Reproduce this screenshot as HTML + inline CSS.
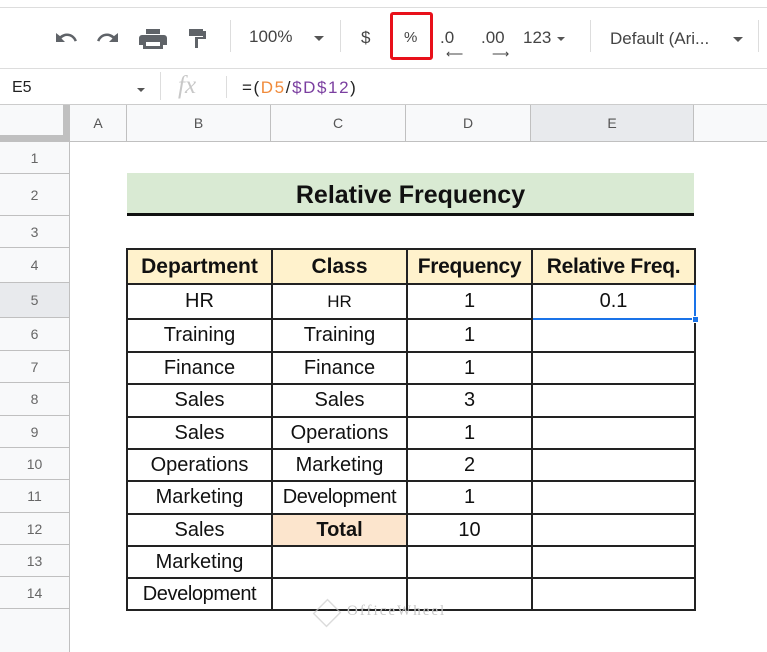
<!DOCTYPE html>
<html><head><style>
*{margin:0;padding:0;box-sizing:border-box}
body{width:767px;height:652px;background:#fff;position:relative;overflow:hidden;font-family:"Liberation Sans",Arial,sans-serif;color:#222}
.a{position:absolute}
.tb{color:#444;font-size:17px}
.rh{position:absolute;left:0;width:70px;background:#f8f9fa;border-bottom:1px solid #c0c0c0;border-right:1px solid #c0c0c0;text-align:center;color:#666;font-size:14px}
.ch{position:absolute;top:105px;height:37px;background:#f8f9fa;border-right:1px solid #c0c0c0;border-bottom:1px solid #c0c0c0;text-align:center;line-height:37px;color:#555;font-size:14px}
table{position:absolute;left:126px;top:248px;border-collapse:collapse}
td{border:2px solid #222;text-align:center;font-size:20px;padding:0;color:#111;white-space:nowrap}
</style></head><body>
<div class="a" style="left:0;top:7px;width:767px;height:1px;background:#ddd"></div>
<div class="a" style="left:0;top:68px;width:767px;height:1px;background:#ddd"></div>
<div class="a" style="left:0;top:104px;width:767px;height:1px;background:#ccc"></div>
<svg class="a" style="left:52px;top:26px" width="170" height="24" viewBox="0 0 170 24">
<path d="M4 7v9h9l-3.5-3.5C11 11 13 10 15 10c3.5 0 6.5 2.3 7.6 5.5l2.3-.8C23.5 10.5 19.6 7.5 15 7.5c-2.7 0-5.1 1-7 2.6z" fill="#5f6368"/>
<path d="M66 7v9h-9l3.5-3.5C59 11 57 10 55 10c-3.5 0-6.5 2.3-7.6 5.5l-2.3-.8C46.5 10.5 50.4 7.5 55 7.5c2.7 0 5.1 1 7 2.6z" fill="#5f6368"/>
<path d="M94 3h14v5H94zM90 9h22a3 3 0 0 1 3 3v7h-4v4H91v-4h-4v-7a3 3 0 0 1 3-3zM94 16v4h14v-4z" fill="#5f6368"/>
<path d="M137 3h14v7h-14zM151 5h3v8h-8v9h-3V11h8z" fill="#5f6368"/>
</svg>
<div class="a" style="left:230px;top:20px;width:1px;height:32px;background:#ddd"></div>
<div class="a tb" style="left:249px;top:27px">100%</div>
<div class="a" style="left:314px;top:36px;border:5px solid transparent;border-top-color:#555"></div>
<div class="a" style="left:340px;top:20px;width:1px;height:32px;background:#ddd"></div>
<div class="a tb" style="left:361px;top:28px">$</div>
<div class="a" style="left:390px;top:12px;width:43px;height:48px;border:3px solid #e8101a;border-radius:3px"></div>
<div class="a tb" style="left:404px;top:29px;font-size:15px">%</div>
<div class="a tb" style="left:440px;top:28px">.0</div>
<div class="a tb" style="left:481px;top:28px">.00</div>
<div class="a" style="left:446px;top:47px;font-size:12px;color:#444">⟵</div>
<div class="a" style="left:492px;top:47px;font-size:12px;color:#444">⟶</div>
<div class="a tb" style="left:523px;top:28px">123</div>
<div class="a" style="left:557px;top:37px;border:4px solid transparent;border-top-color:#555"></div>
<div class="a" style="left:590px;top:20px;width:1px;height:32px;background:#ddd"></div>
<div class="a tb" style="left:610px;top:29px">Default (Ari...</div>
<div class="a" style="left:733px;top:37px;border:5px solid transparent;border-top-color:#555"></div>
<div class="a" style="left:758px;top:20px;width:1px;height:32px;background:#ddd"></div>
<div class="a" style="left:12px;top:79px;font-size:16px;color:#222">E5</div>
<div class="a" style="left:137px;top:88px;border:4px solid transparent;border-top-color:#555"></div>
<div class="a" style="left:160px;top:72px;width:1px;height:28px;background:#ddd"></div>
<div class="a" style="left:178px;top:72px;font-family:'Liberation Serif',serif;font-style:italic;font-size:25px;color:#c8c8c8">fx</div>
<div class="a" style="left:226px;top:76px;width:1px;height:22px;background:#ddd"></div>
<div class="a" style="left:242px;top:78px;font-size:17px;color:#222;letter-spacing:1.6px">=(<span style="color:#f08a3a">D5</span>/<span style="color:#7b3fa0">$D$12</span>)</div>
<div class="a" style="left:0;top:105px;width:70px;height:37px;background:#f8f9fa;border-bottom:1px solid #c0c0c0"></div>
<div class="a" style="left:63px;top:105px;width:7px;height:37px;background:#c0c0c0"></div>
<div class="a" style="left:0;top:135px;width:70px;height:7px;background:#c0c0c0"></div>
<div class="ch" style="left:70px;width:57px">A</div>
<div class="ch" style="left:127px;width:144px">B</div>
<div class="ch" style="left:271px;width:135px">C</div>
<div class="ch" style="left:406px;width:125px">D</div>
<div class="ch" style="left:531px;width:163px;background:#e8eaed">E</div>
<div class="ch" style="left:694px;width:80px"></div>
<div class="rh" style="top:142px;height:32px;line-height:32px">1</div>
<div class="rh" style="top:174px;height:42px;line-height:42px">2</div>
<div class="rh" style="top:216px;height:32px;line-height:32px">3</div>
<div class="rh" style="top:248px;height:35px;line-height:35px">4</div>
<div class="rh" style="top:283px;height:35px;line-height:35px;background:#e8eaed">5</div>
<div class="rh" style="top:318px;height:33px;line-height:33px">6</div>
<div class="rh" style="top:351px;height:32px;line-height:32px">7</div>
<div class="rh" style="top:383px;height:33px;line-height:33px">8</div>
<div class="rh" style="top:416px;height:32px;line-height:32px">9</div>
<div class="rh" style="top:448px;height:32px;line-height:32px">10</div>
<div class="rh" style="top:480px;height:33px;line-height:33px">11</div>
<div class="rh" style="top:513px;height:32px;line-height:32px">12</div>
<div class="rh" style="top:545px;height:32px;line-height:32px">13</div>
<div class="rh" style="top:577px;height:32px;line-height:32px">14</div>
<div class="rh" style="top:609px;height:43px;border-bottom:none"></div>
<div class="a" style="left:127px;top:173px;width:567px;height:40px;background:#d9ead3;text-align:center;line-height:44px;font-size:25px;font-weight:bold;color:#111">Relative Frequency</div>
<div class="a" style="left:127px;top:213px;width:567px;height:3px;background:#111"></div>
<table>
<colgroup><col style="width:145px"><col style="width:135px"><col style="width:125px"><col style="width:163px"></colgroup>
<tr style="height:35px;background:#fff2cc;font-weight:bold;font-size:21px"><td style="font-size:21px"><b>Department</b></td><td style="font-size:21px"><b>Class</b></td><td style="font-size:21px;letter-spacing:-.3px"><b>Frequency</b></td><td style="font-size:21px;letter-spacing:-.3px"><b>Relative Freq.</b></td></tr>
<tr style="height:35px"><td>HR</td><td style="font-size:17px">HR</td><td>1</td><td style="border:2px solid #1a73e8;position:relative">0.1<span style="position:absolute;right:-5px;bottom:-5px;width:7px;height:7px;background:#1a73e8;border:1px solid #fff"></span></td></tr>
<tr style="height:33px"><td>Training</td><td>Training</td><td>1</td><td></td></tr>
<tr style="height:32px"><td>Finance</td><td>Finance</td><td>1</td><td></td></tr>
<tr style="height:33px"><td>Sales</td><td>Sales</td><td>3</td><td></td></tr>
<tr style="height:32px"><td>Sales</td><td>Operations</td><td>1</td><td></td></tr>
<tr style="height:32px"><td>Operations</td><td>Marketing</td><td>2</td><td></td></tr>
<tr style="height:33px"><td>Marketing</td><td style="letter-spacing:-.4px">Development</td><td>1</td><td></td></tr>
<tr style="height:32px"><td>Sales</td><td style="background:#fce5cd;font-weight:bold">Total</td><td>10</td><td></td></tr>
<tr style="height:32px"><td>Marketing</td><td></td><td></td><td></td></tr>
<tr style="height:32px"><td style="letter-spacing:-.4px">Development</td><td></td><td></td><td></td></tr>
</table>
<div class="a" style="left:313px;top:598px;width:28px;height:30px;border:2px solid #ccc;transform:rotate(45deg) scale(.7);opacity:.7"></div>
<div class="a" style="left:347px;top:603px;font-family:'Liberation Serif',serif;font-size:15px;color:#c8c8c8;letter-spacing:2px">OfficeWheel</div>
</body></html>
